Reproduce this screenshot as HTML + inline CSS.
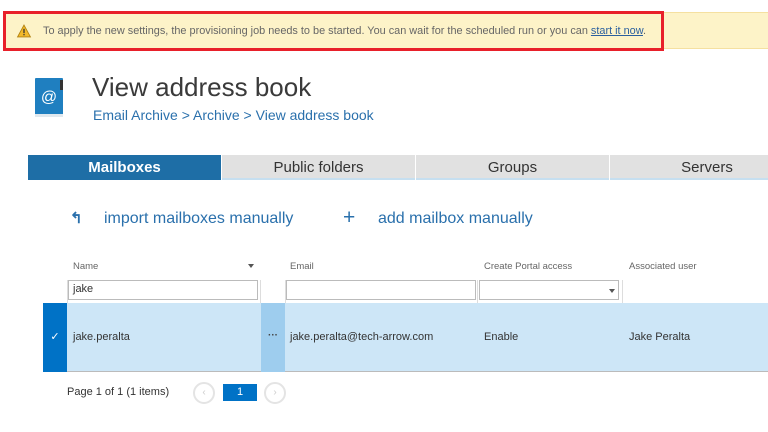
<!DOCTYPE html>
<html><head><style>
*{margin:0;padding:0;box-sizing:border-box}
body{width:768px;height:432px;background:#fff;font-family:"Liberation Sans",sans-serif;position:relative;overflow:hidden;color:#333}
.a{position:absolute}
</style></head><body>
<div class="a" style="left:4px;top:12px;width:764px;height:37px;background:#fdf3c8;border-top:1px solid #f5e0a0;border-bottom:1px solid #f5e0a0"></div>
<div class="a" style="left:3px;top:11px;width:661px;height:40px;border:3px solid #e8202a"></div>
<svg class="a" style="left:16px;top:24px" width="16" height="14" viewBox="0 0 14 13"><path d="M7 1L13 12H1Z" fill="#f2b92a" stroke="#b08010" stroke-width="0.8"/><rect x="6.4" y="4.5" width="1.2" height="4" fill="#333"/><rect x="6.4" y="9.3" width="1.2" height="1.2" fill="#333"/></svg>
<div class="a" style="left:43px;top:25px;font-size:10.9px;color:#666;white-space:nowrap">To apply the new settings, the provisioning job needs to be started. You can wait for the scheduled run or you can <span style="color:#2a5f9e;text-decoration:underline">start it now</span>.</div>
<svg class="a" style="left:32px;top:77px" width="36" height="44" viewBox="0 0 36 44"><rect x="3" y="1" width="28" height="38" rx="1" fill="#1f7fc0"/><rect x="28" y="3" width="3" height="10" fill="#333"/><rect x="3" y="37" width="28" height="3" fill="#e0e8ee"/><text x="17" y="25" font-size="16" fill="#fff" text-anchor="middle" font-family="Liberation Sans">@</text></svg>
<div class="a" style="left:92px;top:72px;font-size:26px;color:#3a3a3a">View address book</div>
<div class="a" style="left:93px;top:107px;font-size:14px;color:#2a70ac">Email Archive &gt; Archive &gt; View address book</div>
<div class="a" style="left:28px;top:155px;width:193px;height:25px;background:#1e6ea6;color:#fff;font-weight:bold;font-size:15px;text-align:center;line-height:25px">Mailboxes</div>
<div class="a" style="left:222px;top:155px;width:193px;height:25px;background:#e1e1e1;border-bottom:2px solid #c6dff0;font-size:15px;text-align:center;line-height:25px;color:#333">Public folders</div>
<div class="a" style="left:416px;top:155px;width:193px;height:25px;background:#e1e1e1;border-bottom:2px solid #c6dff0;font-size:15px;text-align:center;line-height:25px;color:#333">Groups</div>
<div class="a" style="left:610px;top:155px;width:158px;height:25px;background:#e1e1e1;border-bottom:2px solid #c6dff0;font-size:15px;text-align:center;line-height:25px;color:#333;text-indent:36px">Servers</div>
<div class="a" style="left:70px;top:209px;font-size:15px;color:#2a70ac;font-weight:bold">↰</div>
<div class="a" style="left:104px;top:210px;font-size:16px;color:#2a70ac">import mailboxes manually</div>
<div class="a" style="left:343px;top:206px;font-size:21px;color:#2a70ac">+</div>
<div class="a" style="left:378px;top:210px;font-size:16px;color:#2a70ac">add mailbox manually</div>
<div class="a" style="left:73px;top:261px;font-size:9.5px;color:#666">Name</div>
<div class="a" style="left:248px;top:264px;width:0;height:0;border-left:3px solid transparent;border-right:3px solid transparent;border-top:4px solid #555"></div>
<div class="a" style="left:290px;top:261px;font-size:9.5px;color:#666">Email</div>
<div class="a" style="left:484px;top:261px;font-size:9.5px;color:#666">Create Portal access</div>
<div class="a" style="left:629px;top:261px;font-size:9.5px;color:#666">Associated user</div>
<div class="a" style="left:67px;top:280px;width:1px;height:23px;background:#ddd"></div>
<div class="a" style="left:68px;top:280px;width:190px;height:20px;border:1px solid #bbb;font-size:11px;padding:2px 4px;color:#333">jake</div>
<div class="a" style="left:260px;top:280px;width:1px;height:23px;background:#ddd"></div>
<div class="a" style="left:285px;top:280px;width:1px;height:23px;background:#ddd"></div>
<div class="a" style="left:286px;top:280px;width:190px;height:20px;border:1px solid #bbb"></div>
<div class="a" style="left:477px;top:280px;width:1px;height:23px;background:#ddd"></div>
<div class="a" style="left:479px;top:280px;width:140px;height:20px;border:1px solid #bbb"></div>
<div class="a" style="left:609px;top:289px;width:0;height:0;border-left:3px solid transparent;border-right:3px solid transparent;border-top:4px solid #555"></div>
<div class="a" style="left:622px;top:280px;width:1px;height:23px;background:#ddd"></div>
<div class="a" style="left:43px;top:303px;width:725px;height:69px;background:#cde6f7;border-bottom:1px solid #bbb"></div>
<div class="a" style="left:43px;top:303px;width:24px;height:69px;background:#0072c6;color:#fff;font-size:11px;text-align:center;line-height:69px">✓</div>
<div class="a" style="left:261px;top:303px;width:24px;height:69px;background:#9ecdee;color:#444;font-size:10px;text-align:center;line-height:66px;font-weight:bold">···</div>
<div class="a" style="left:73px;top:331px;font-size:11px;color:#333">jake.peralta</div>
<div class="a" style="left:290px;top:331px;font-size:11px;color:#333">jake.peralta@tech-arrow.com</div>
<div class="a" style="left:484px;top:331px;font-size:11px;color:#333">Enable</div>
<div class="a" style="left:629px;top:331px;font-size:11px;color:#333">Jake Peralta</div>
<div class="a" style="left:67px;top:386px;font-size:11px;color:#333">Page 1 of 1 (1 items)</div>
<div class="a" style="left:193px;top:382px;width:22px;height:22px;border:2px solid #e4e4e4;border-radius:50%;color:#ccc;font-size:10px;text-align:center;line-height:18px">‹</div>
<div class="a" style="left:223px;top:384px;width:34px;height:17px;background:#0072c6;color:#fff;font-size:11px;text-align:center;line-height:17px">1</div>
<div class="a" style="left:264px;top:382px;width:22px;height:22px;border:2px solid #e4e4e4;border-radius:50%;color:#ccc;font-size:10px;text-align:center;line-height:18px">›</div>
</body></html>
